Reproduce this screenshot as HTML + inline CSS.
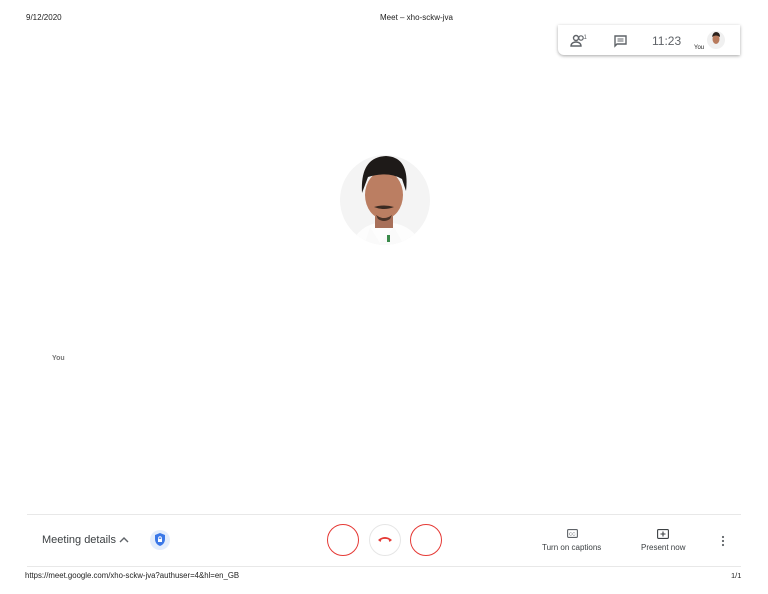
<!DOCTYPE html>
<html><head><meta charset="utf-8"><style>
*{margin:0;padding:0;box-sizing:border-box}
body{width:768px;height:594px;background:#fff;position:relative;overflow:hidden;font-family:"Liberation Sans",Arial,sans-serif;color:#222}
.a{position:absolute;white-space:nowrap}
</style></head><body>
<div class="a" style="left:26px;top:13px;font-size:8px">9/12/2020</div>
<div class="a" style="left:380px;top:13px;font-size:8px">Meet – xho-sckw-jva</div>

<div class="a" style="left:558px;top:25px;width:182px;height:30px;background:#fff;border-radius:0 0 0 6px;box-shadow:0 1px 3px rgba(0,0,0,.35)">
  <svg class="a" style="left:12px;top:9px" width="18" height="14" viewBox="0 0 18 14"><circle cx="6" cy="4" r="2.5" fill="none" stroke="#5f6368" stroke-width="1.4"/><path d="M1 12c0-3 3-4 5-4s5 1 5 4z" fill="none" stroke="#5f6368" stroke-width="1.4"/><circle cx="11" cy="4" r="2.2" fill="none" stroke="#5f6368" stroke-width="1.2"/><text x="13.5" y="5" font-size="6" fill="#5f6368" font-family="Liberation Sans">1</text></svg>
  <svg class="a" style="left:56px;top:10px" width="13" height="13" viewBox="0 0 13 13"><path d="M1 1h11v8H3l-2 2z" fill="none" stroke="#5f6368" stroke-width="1.4"/><path d="M3.5 4h6M3.5 6h6" stroke="#5f6368"/></svg>
  <div class="a" style="left:94px;top:9px;font-size:12px;color:#5f6368">11:23</div>
  <div class="a" style="left:136px;top:20px;font-size:6px">You</div>
  <svg class="a" style="left:149px;top:6px" width="18" height="18" viewBox="0 0 18 18"><defs><clipPath id="s"><circle cx="9" cy="9" r="9"/></clipPath></defs><g clip-path="url(#s)"><rect width="18" height="18" fill="#f0f0f0"/><ellipse cx="9" cy="8" rx="3.5" ry="5" fill="#b87a5c"/><path d="M5 6Q6 1 9 1Q13 1 13 6Q9 3 5 6z" fill="#2a211c"/></g></svg>
</div>

<svg class="a" style="left:340px;top:155px" width="90" height="90" viewBox="0 0 90 90">
  <defs><clipPath id="c"><circle cx="45" cy="45" r="45"/></clipPath></defs>
  <g clip-path="url(#c)">
    <rect width="90" height="90" fill="#f4f4f4"/>
    <path d="M10 90 Q20 70 38 68 L52 68 Q72 70 82 90z" fill="#fdfdfd"/>
    <rect x="35" y="55" width="18" height="18" fill="#a8705a"/>
    <ellipse cx="44" cy="40" rx="19" ry="24" fill="#bb7e62"/>
    <path d="M22 38 Q20 2 46 1 Q70 2 66 36 L62 24 Q48 16 28 22z" fill="#1e1a18"/>
    <path d="M34 52 Q44 49 54 52 Q44 56 34 52z" fill="#3a2a22"/>
    <path d="M36 60 Q44 66 52 60 L50 64 Q44 68 38 64z" fill="#4a3328"/>
    <path d="M30 72 L40 88 L54 72 L64 90 H24z" fill="#fafafa"/>
    <rect x="47" y="80" width="3" height="7" fill="#3a8a4a"/>
  </g>
</svg>

<div class="a" style="left:52px;top:355px;font-size:7px;color:#777;font-weight:bold">You</div>

<div class="a" style="left:27px;top:514px;width:714px;height:53px;border-top:1px solid #e8e8e8;border-bottom:1px solid #e8e8e8"></div>
<div class="a" style="left:42px;top:534px;font-size:11px;color:#3c4043">Meeting details</div>
<svg class="a" style="left:119px;top:536px" width="10" height="8" viewBox="0 0 10 8"><path d="M1 6l4-4 4 4" fill="none" stroke="#5f6368" stroke-width="1.4"/></svg>
<div class="a" style="left:150px;top:530px;width:20px;height:20px;border-radius:50%;background:#e3edfc"></div>
<svg class="a" style="left:154px;top:532px" width="12" height="15" viewBox="0 0 12 15"><path d="M6 1L1 3v4c0 3.5 2.2 6 5 7 2.8-1 5-3.5 5-7V3z" fill="#3b78e7"/><rect x="4" y="7" width="4" height="3" fill="#fff"/><path d="M4.7 7V6a1.3 1.3 0 012.6 0v1" stroke="#fff" fill="none"/></svg>

<div class="a" style="left:327px;top:524px;width:32px;height:32px;border-radius:50%;border:1px solid #e53935"></div>
<div class="a" style="left:369px;top:524px;width:32px;height:32px;border-radius:50%;border:1px solid #e6e6e6"></div>
<svg class="a" style="left:377px;top:535px" width="16" height="8" viewBox="0 0 16 8"><path d="M1 5Q8 -1 15 5L12.5 7 11.5 4.5Q8 3.3 4.5 4.5L3.5 7z" fill="#e53935"/></svg>
<div class="a" style="left:410px;top:524px;width:32px;height:32px;border-radius:50%;border:1px solid #e53935"></div>

<svg class="a" style="left:567px;top:529px" width="11" height="9" viewBox="0 0 11 9"><rect x=".6" y=".6" width="9.8" height="7.8" rx="1" fill="none" stroke="#5f6368" stroke-width="1.1"/><text x="2" y="6.3" font-size="4.5" fill="#5f6368" font-family="Liberation Sans">CC</text></svg>
<div class="a" style="left:542px;top:543px;font-size:8px;color:#3c4043">Turn on captions</div>
<svg class="a" style="left:657px;top:529px" width="12" height="10" viewBox="0 0 12 10"><rect x=".6" y=".6" width="10.8" height="8.8" rx="1" fill="none" stroke="#3c4043" stroke-width="1.1"/><path d="M6 2.5v5M3.5 5h5" stroke="#3c4043" stroke-width="1.1"/></svg>
<div class="a" style="left:641px;top:543px;font-size:8px;color:#3c4043">Present now</div>
<svg class="a" style="left:721px;top:535px" width="4" height="12" viewBox="0 0 4 12"><circle cx="2" cy="2" r="1.1" fill="#5f6368"/><circle cx="2" cy="6" r="1.1" fill="#5f6368"/><circle cx="2" cy="10" r="1.1" fill="#5f6368"/></svg>

<div class="a" style="left:25px;top:571px;font-size:7.8px">https://meet.google.com/xho-sckw-jva?authuser=4&amp;hl=en_GB</div>
<div class="a" style="left:731px;top:571px;font-size:7.5px">1/1</div>
</body></html>
